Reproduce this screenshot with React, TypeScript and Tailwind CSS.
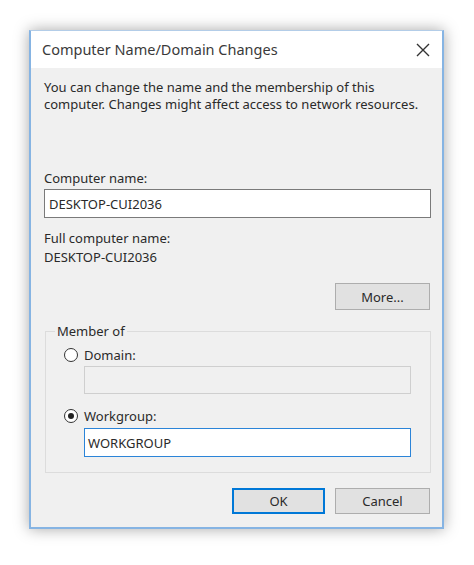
const FONT = { fontFamily: '"Noto Sans", "Open Sans", Arial, sans-serif' };

function Radio({ checked, label }: { checked?: boolean; label: string }) {
  return (
    <div className="flex items-center h-[16px] pl-[18px]">
      <span className="w-[14px] h-[14px] rounded-full border border-[#333] bg-white flex items-center justify-center">
        {checked && <span className="w-[6px] h-[6px] rounded-full bg-[#222]" />}
      </span>
      <span className="ml-[6px]">{label}</span>
    </div>
  );
}

export default function App() {
  return (
    <div className="w-[474px] h-[565px] bg-white pt-[30px] pl-[29px] text-[13px] text-[#2a2a2a]" style={FONT}>
      <div className="w-[415px] h-[499px] flex flex-col bg-[#f0f0f0] border-2 border-t border-[#86b4e3] border-t-[#b3cde8] shadow-[0_0_14px_rgba(0,0,0,0.35)]">
        <div className="h-[37px] bg-white flex items-center justify-between pl-[11px] pr-[12px]">
          <span className="text-[14.5px] text-[#3a3a3a]">Computer Name/Domain Changes</span>
          <svg width="14" height="14" viewBox="0 0 14 14" aria-label="Close">
            <path d="M1 1 L13 13 M13 1 L1 13" stroke="#333" strokeWidth="1.4" />
          </svg>
        </div>

        <div className="flex flex-col pl-[13px] pr-[11px] leading-[16px]">
          <p className="mt-[11px] leading-[17px]">
            You can change the name and the membership of this
            <br />
            computer. Changes might affect access to network resources.
          </p>

          <div className="mt-[57px]">Computer name:</div>
          <div className="mt-[3px] h-[29px] bg-white border border-[#7a7a7a] flex items-center px-[4px]">
            DESKTOP-CUI2036
          </div>

          <div className="mt-[12px]">Full computer name:</div>
          <div className="mt-[3px]">DESKTOP-CUI2036</div>

          <button className="self-end mr-[1px] mt-[18px] w-[95px] h-[27px] bg-[#e1e1e1] border border-[#adadad] text-[#2a2a2a]">
            More...
          </button>

          <fieldset className="mt-[13px] ml-[1px] border border-[#dcdcdc] pb-[15px]">
            <legend className="ml-[9px] px-[2px] leading-[16px]">Member of</legend>
            <div className="mt-[8px]">
              <Radio label="Domain:" />
            </div>
            <div className="mt-[3px] ml-[38px] mr-[19px] h-[28px] bg-[#f0f0f0] border border-[#cfcfcf]" />
            <div className="mt-[14px]">
              <Radio checked label="Workgroup:" />
            </div>
            <div className="mt-[4px] ml-[38px] mr-[19px] h-[29px] bg-white border-[1.5px] border-[#2b84d8] flex items-center px-[3px]">
              WORKGROUP
            </div>
          </fieldset>

          <div className="mt-[15px] flex justify-end gap-[10px] pr-[1px]">
            <button className="w-[93px] h-[26px] bg-[#e1e1e1] border-2 border-[#0078d7] text-[#2a2a2a]">OK</button>
            <button className="w-[95px] h-[26px] bg-[#e1e1e1] border border-[#adadad] text-[#2a2a2a]">Cancel</button>
          </div>
        </div>
      </div>
    </div>
  );
}
